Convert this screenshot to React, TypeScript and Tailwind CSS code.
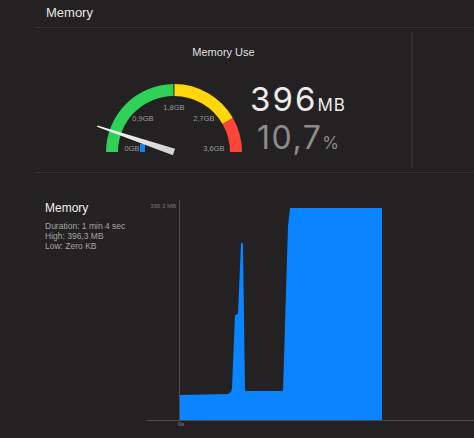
const BLUE = "#0a84ff";

function pt(cx: number, cy: number, r: number, deg: number) {
  const a = (deg * Math.PI) / 180;
  return [cx + r * Math.cos(a), cy - r * Math.sin(a)];
}

// annular sector from angle a0 (left) to a1 (right), clockwise on screen
function sector(cx: number, cy: number, r0: number, r1: number, a0: number, a1: number) {
  const [x1, y1] = pt(cx, cy, r1, a0);
  const [x2, y2] = pt(cx, cy, r1, a1);
  const [x3, y3] = pt(cx, cy, r0, a1);
  const [x4, y4] = pt(cx, cy, r0, a0);
  return `M${x1} ${y1} A${r1} ${r1} 0 0 1 ${x2} ${y2} L${x3} ${y3} A${r0} ${r0} 0 0 0 ${x4} ${y4} Z`;
}

function Gauge() {
  const cx = 78;
  const cy = 74;
  const labels = [
    { t: "0GB", x: 36, y: 70 },
    { t: "0,9GB", x: 47, y: 40 },
    { t: "1,8GB", x: 78, y: 29 },
    { t: "2,7GB", x: 108, y: 40 },
    { t: "3,6GB", x: 118, y: 70 },
  ];
  return (
    <svg width="150" height="82" viewBox="0 0 150 82" className="shrink-0 overflow-visible">
      <defs>
        <linearGradient id="needle" x1="0" y1="0" x2="1" y2="0">
          <stop offset="0" stopColor="#ffffff" />
          <stop offset="1" stopColor="#cfcfcf" />
        </linearGradient>
      </defs>
      <path d={sector(cx, cy, 56, 68, 180, 90.6)} fill="#30d158" />
      <path d={sector(cx, cy, 56, 68, 89.6, 30)} fill="#ffd60a" />
      <path d={sector(cx, cy, 56, 68, 30, 0)} fill="#ff453a" />
      {labels.map((l) => (
        <text
          key={l.t}
          x={l.x}
          y={l.y}
          textAnchor="middle"
          dominantBaseline="central"
          fill="#9c9c9c"
          fontSize="7.5"
          fontFamily="'Liberation Sans', Arial, sans-serif"
        >
          {l.t}
        </text>
      ))}
      <rect x="44" y="66" width="5" height="8" fill={BLUE} />
      <polygon points="1.1,48.7 1.5,47.5 79.1,70.7 76.9,77.3" fill="url(#needle)" />
    </svg>
  );
}

function Chart() {
  // points relative to the axis origin (x=179, y=200)
  const pts = [
    [0, 221],
    [0, 195],
    [49, 194],
    [52, 192],
    [53, 188],
    [56, 115],
    [59, 114],
    [62, 43],
    [64, 43],
    [66, 191],
    [104, 191],
    [109, 26],
    [111, 8],
    [203, 8],
    [203, 221],
  ];
  return (
    <svg width="295" height="221" viewBox="0 0 295 221" className="overflow-visible">
      <polygon points={pts.map((p) => p.join(",")).join(" ")} fill={BLUE} />
      <line x1="0.5" y1="0" x2="0.5" y2="221" stroke="#4e4c4c" strokeWidth="1" />
      <line x1="-32" y1="220.5" x2="295" y2="220.5" stroke="#4e4c4c" strokeWidth="1" />
    </svg>
  );
}

export default function App() {
  return (
    <div
      className="w-[474px] h-[438px] overflow-hidden bg-[#232121] text-[#e6e6e6]"
      style={{ fontFamily: "'Liberation Sans', Arial, sans-serif" }}
    >
      <div className="ml-[36px] h-[28px] pl-[10px] pb-[1px] flex items-center border-b border-[#363434]">
        <span className="text-[13px]">Memory</span>
      </div>

      <div className="ml-[36px] h-[145px] flex border-b border-[#363434]">
        <div className="w-[375px] flex flex-col">
          <div className="pt-[17px] text-center text-[11px] leading-[14px] text-[#e0e0e0]">Memory Use</div>
          <div className="mt-[19px] flex items-start">
            <div className="ml-[60px]">
              <Gauge />
            </div>
            <div className="mt-[5px] w-[104px] flex flex-col items-center" style={{ fontFamily: "Inter, sans-serif" }}>
              <div className="flex items-baseline leading-none text-[#ececec]">
                <span className="text-[33px] tracking-[2px]">396</span>
                <span className="text-[17px] tracking-[1px]">MB</span>
              </div>
              <div className="mt-[6px] flex items-baseline leading-none text-[#8c8c8c]">
                <span className="text-[32px] tracking-[1.5px]">10,7</span>
                <span className="text-[17px]">%</span>
              </div>
            </div>
          </div>
        </div>
        <div className="w-[2px] my-[4px] bg-[#313030]" />
        <div className="flex-1" />
      </div>

      <div className="ml-[36px] flex">
        <div className="w-[143px] flex justify-between">
          <div className="pl-[9px] pt-[28px]">
            <div className="text-[12px] leading-[15px] text-[#f0f0f0]">Memory</div>
            <div className="mt-[5px] text-[8.5px] leading-[10px] text-[#a6a6a6]">
              <div>Duration: 1 min 4 sec</div>
              <div>High: 396,3 MB</div>
              <div>Low: Zero KB</div>
            </div>
          </div>
          <div className="pt-[30px] pr-[3px] text-[6px] leading-[7px] text-[#7a7a7a]">396,3 MB</div>
        </div>
        <div className="pt-[27px] flex flex-col">
          <Chart />
          <div className="-ml-[1px] text-[6px] leading-[7px] text-[#8a8a8a]">0s</div>
        </div>
      </div>
    </div>
  );
}
